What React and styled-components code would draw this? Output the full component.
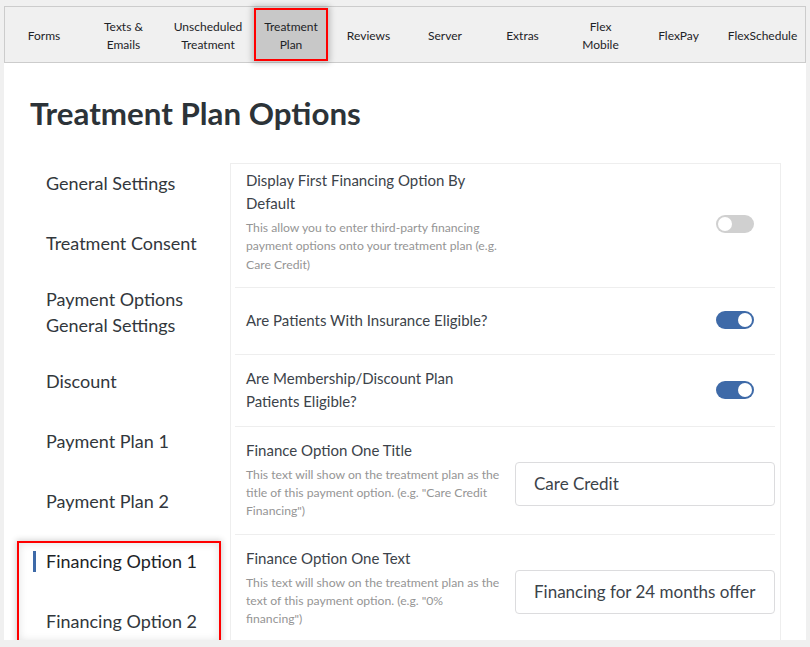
import React from "react";
import styled, { createGlobalStyle, css } from "styled-components";

const GlobalStyle = createGlobalStyle`
  html, body { margin: 0; padding: 0; }
  body {
    background: #f0f0f0;
    font-family: Lato, "Open Sans", "Liberation Sans", sans-serif;
    color: #32373c;
  }
  * { box-sizing: border-box; }
`;

const Frame = styled.div`
  margin: 6px 4px 0 4px;
  width: 802px;
`;

const TabBar = styled.nav`
  display: flex;
  height: 57px;
  border: 1px solid #cccccc;
  background: #f0f0f0;
`;

const Tab = styled.div`
  flex: 0 0 ${(p) => p.$w}px;
  display: flex;
  align-items: center;
  justify-content: center;
  padding: 1px 0;
`;

const TabLabel = styled.div`
  height: 100%;
  display: flex;
  align-items: center;
  justify-content: center;
  text-align: center;
  padding: 2px 8px 0;
  font-size: 12px;
  line-height: 18px;
  color: #1d2327;
  ${(p) =>
    p.$active &&
    css`
      background: #c8c8c8;
      border: 2px solid #ff0000;
      box-shadow: 0 0 6px 2px rgba(0, 0, 0, 0.22);
    `}
`;

const Content = styled.main`
  background: #ffffff;
  height: 577px;
  overflow: hidden;
`;

const Heading = styled.h1`
  margin: 0;
  padding: 32px 0 0 26px;
  font-size: 31.3px;
  line-height: 36px;
  font-weight: 700;
  color: #2c3338;
`;

const Body = styled.div`
  display: flex;
  align-items: flex-start;
  margin-top: 22px;
`;

const SideNav = styled.ul`
  list-style: none;
  margin: 0;
  padding: 0;
  width: 226px;
  flex: 0 0 226px;
`;

const NavItem = styled.li`
  position: relative;
  min-height: 60px;
  display: flex;
  align-items: center;
  padding: 13px 0 13px 42px;
  font-size: 18px;
  line-height: 26px;
  color: ${(p) => (p.$active ? "#1d2327" : "#32373c")};
  ${(p) =>
    p.$active &&
    css`
      &::before {
        content: "";
        position: absolute;
        left: 29px;
        top: 20px;
        width: 3px;
        height: 21px;
        background: #3e6aa8;
      }
    `}
`;

const Highlight = styled.div`
  position: relative;
  &::after {
    content: "";
    position: absolute;
    left: 13px;
    right: 9px;
    top: 10px;
    height: 98px;
    border: 2px solid #ff0000;
    box-shadow: 0 0 6px 1px rgba(0, 0, 0, 0.18), inset 0 0 8px rgba(0, 0, 0, 0.12);
    pointer-events: none;
  }
`;

const Card = styled.section`
  flex: 1;
  margin: 10px 25px 0 0;
  border: 1px solid #eeeeee;
  border-bottom: none;
  min-height: 480px;
`;

const Row = styled.div`
  display: grid;
  grid-template-columns: 260px 1fr;
  column-gap: 9px;
  align-items: center;
  margin: 0 5px 0 4px;
  padding: ${(p) => p.$pad || "12px 0 13px"};
  padding-left: 11px;
  min-height: 67px;
  border-bottom: 1px solid #eeeeee;
`;

const TextCol = styled.div``;

const Title = styled.div`
  font-size: 15px;
  line-height: 23px;
  color: #3c434a;
`;

const Desc = styled.div`
  margin-top: 4px;
  padding-right: 4px;
  font-size: 12.2px;
  line-height: 18.3px;
  color: #959595;
`;

const Toggle = styled.div`
  justify-self: end;
  margin: ${(p) => (p.$low ? "6px" : "0")} 21px 0 0;
  position: relative;
  width: 38px;
  height: 18px;
  border-radius: 9px;
  background: ${(p) => (p.$on ? "#3e6aa8" : "#d0d0d0")};
  &::after {
    content: "";
    position: absolute;
    top: 2px;
    left: ${(p) => (p.$on ? "22px" : "2px")};
    width: 14px;
    height: 14px;
    border-radius: 50%;
    background: #ffffff;
  }
`;

const Input = styled.div`
  margin-top: 8px;
  height: 44px;
  border: 1px solid #dcdcde;
  border-radius: 4px;
  display: flex;
  align-items: center;
  padding-left: 18px;
  font-size: 17px;
  color: #3c434a;
  white-space: nowrap;
  overflow: hidden;
`;

const tabs = [
  { w: 78, lines: ["Forms"] },
  { w: 81, lines: ["Texts &", "Emails"] },
  { w: 88, lines: ["Unscheduled", "Treatment"] },
  { w: 78, lines: ["Treatment", "Plan"], active: true },
  { w: 77, lines: ["Reviews"] },
  { w: 76, lines: ["Server"] },
  { w: 79, lines: ["Extras"] },
  { w: 77, lines: ["Flex", "Mobile"] },
  { w: 79, lines: ["FlexPay"] },
  { w: 89, lines: ["FlexSchedule"] },
];

export default function App() {
  return (
    <>
      <GlobalStyle />
      <Frame>
        <TabBar>
          {tabs.map((t) => (
            <Tab key={t.lines.join()} $w={t.w}>
              <TabLabel $active={t.active}>
                <span>
                  {t.lines.map((l, i) => (
                    <React.Fragment key={i}>
                      {i > 0 && <br />}
                      {l}
                    </React.Fragment>
                  ))}
                </span>
              </TabLabel>
            </Tab>
          ))}
        </TabBar>
        <Content>
          <Heading>Treatment Plan Options</Heading>
          <Body>
            <SideNav>
              <NavItem>General Settings</NavItem>
              <NavItem>Treatment Consent</NavItem>
              <NavItem>
                Payment Options
                <br />
                General Settings
              </NavItem>
              <NavItem>Discount</NavItem>
              <NavItem>Payment Plan 1</NavItem>
              <NavItem>Payment Plan 2</NavItem>
              <Highlight>
                <NavItem $active>Financing Option 1</NavItem>
                <NavItem>Financing Option 2</NavItem>
              </Highlight>
            </SideNav>
            <Card>
              <Row $pad="5px 0 13px">
                <TextCol>
                  <Title>Display First Financing Option By Default</Title>
                  <Desc>
                    This allow you to enter third-party financing payment options onto your
                    treatment plan (e.g. Care Credit)
                  </Desc>
                </TextCol>
                <Toggle $low />
              </Row>
              <Row>
                <TextCol>
                  <Title>Are Patients With Insurance Eligible?</Title>
                </TextCol>
                <Toggle $on />
              </Row>
              <Row>
                <TextCol>
                  <Title>Are Membership/Discount Plan Patients Eligible?</Title>
                </TextCol>
                <Toggle $on />
              </Row>
              <Row>
                <TextCol>
                  <Title>Finance Option One Title</Title>
                  <Desc>
                    This text will show on the treatment plan as the title of this payment
                    option. (e.g. "Care Credit Financing")
                  </Desc>
                </TextCol>
                <Input>Care Credit</Input>
              </Row>
              <Row>
                <TextCol>
                  <Title>Finance Option One Text</Title>
                  <Desc>
                    This text will show on the treatment plan as the text of this payment
                    option. (e.g. "0% financing")
                  </Desc>
                </TextCol>
                <Input>Financing for 24 months offer</Input>
              </Row>
            </Card>
          </Body>
        </Content>
      </Frame>
    </>
  );
}
